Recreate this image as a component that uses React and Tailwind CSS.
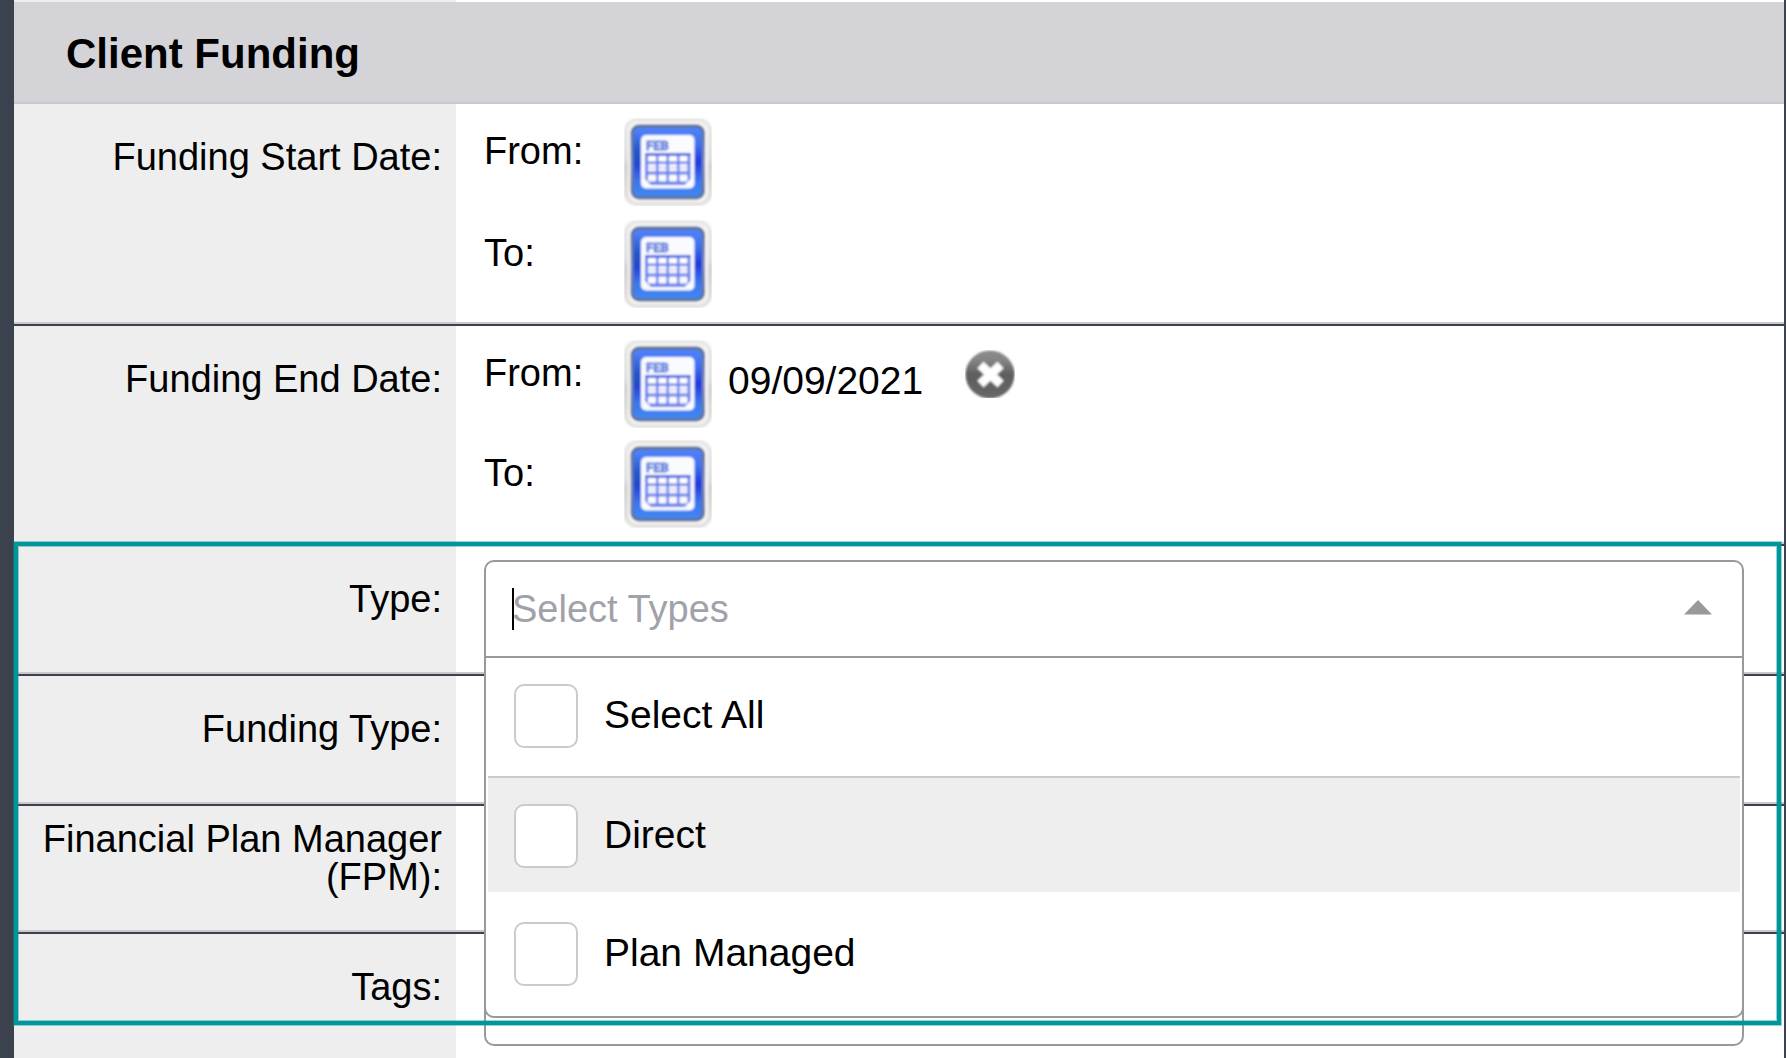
import { useState } from "react";

function CalendarIcon() {
  return (
    <svg viewBox="0 0 88 88" className="block size-[88px]" aria-hidden="true">
      <defs>
        <linearGradient id="cal-frame" x1="0" y1="0" x2="0" y2="1">
          <stop offset="0" stopColor="#e9e8e7" />
          <stop offset="0.45" stopColor="#dedede" />
          <stop offset="0.55" stopColor="#d2d0ce" />
          <stop offset="1" stopColor="#e4e3e1" />
        </linearGradient>
        <linearGradient id="cal-blue" x1="0" y1="0" x2="0" y2="1">
          <stop offset="0" stopColor="#5384fb" />
          <stop offset="0.25" stopColor="#3f72ee" />
          <stop offset="0.5" stopColor="#2038de" />
          <stop offset="0.75" stopColor="#3a74ea" />
          <stop offset="1" stopColor="#4489f4" />
        </linearGradient>
        <linearGradient id="cal-left" x1="0" y1="0" x2="0" y2="1">
          <stop offset="0" stopColor="#2258c4" stopOpacity="0" />
          <stop offset="0.4" stopColor="#1f55c0" stopOpacity="0.9" />
          <stop offset="0.7" stopColor="#2258c4" stopOpacity="0" />
        </linearGradient>
        <linearGradient id="cal-edge" x1="0" y1="0" x2="0" y2="1">
          <stop offset="0" stopColor="#5d6f92" />
          <stop offset="0.5" stopColor="#7a89b8" />
          <stop offset="1" stopColor="#5d7093" />
        </linearGradient>
        <linearGradient id="cal-cell" x1="0" y1="0" x2="0" y2="1">
          <stop offset="0" stopColor="#ffffff" />
          <stop offset="0.5" stopColor="#dfe2fb" />
          <stop offset="1" stopColor="#ffffff" />
        </linearGradient>
        <filter id="cal-soft" x="-5%" y="-5%" width="110%" height="110%">
          <feGaussianBlur stdDeviation="1.2" />
        </filter>
      </defs>
      <g filter="url(#cal-soft)">
        <rect x="2" y="2" width="84" height="84" rx="11" fill="#f6f6f5" stroke="url(#cal-frame)" strokeWidth="4" />
        <rect x="8" y="8" width="71.500" height="72" rx="7" fill="url(#cal-blue)" stroke="url(#cal-edge)" strokeWidth="3" />
        <rect x="9.5" y="14" width="7" height="58" fill="url(#cal-left)" />
        <rect x="17" y="17" width="53.500" height="53.500" rx="5" fill="#fafbff" />
        <text x="22" y="32" fontSize="13" fontWeight="700" fill="#6584de" stroke="#6584de" strokeWidth="0.8" className="font-['Roboto',sans-serif]">
          FEB
        </text>
        <path d="M21 35H66.500V61L60.500 67H27L21 61Z" fill="#6d83ea" />
        <path d="M21 35H66.500V37.500H21Z" fill="#4a68de" />
        {[24, 34.500, 45, 55.500].map((x) => (
          <g key={x}>
            <rect x={x} y="38" width="8" height="5.500" rx="0.5" fill="#ffffff" />
            <rect x={x} y="46" width="8" height="7.500" rx="0.5" fill="url(#cal-cell)" />
            <rect x={x} y="56.500" width="8" height="7" rx="1" fill="#fafbff" />
          </g>
        ))}
      </g>
    </svg>
  );
}

function ClearIcon() {
  return (
    <svg viewBox="0 0 50 48" className="block h-[48px] w-[50px]" aria-hidden="true">
      <defs>
        <linearGradient id="clear-fill" x1="0" y1="0" x2="0" y2="1">
          <stop offset="0" stopColor="#8c8c8c" />
          <stop offset="0.2" stopColor="#858585" />
          <stop offset="0.5" stopColor="#5e5e5e" />
          <stop offset="1" stopColor="#686868" />
        </linearGradient>
        <filter id="clear-soft" x="-5%" y="-5%" width="110%" height="110%">
          <feGaussianBlur stdDeviation="1.1" />
        </filter>
      </defs>
      <g filter="url(#clear-soft)">
        <ellipse cx="25" cy="24.500" rx="24.500" ry="24" fill="url(#clear-fill)" />
        <path d="M15.500 15L35.500 34M35.500 15L15.500 34" stroke="#ffffff" strokeWidth="9" />
      </g>
    </svg>
  );
}

function Row({ label, htmlFor, first, last, tight, children }) {
  return (
    <div
      className={
        "grid grid-cols-[442px_minmax(0,1fr)] border-[#c9c9c9] border-t-[#3b424d] " +
        (first ? "border-b-2 " : last ? "grow border-t-2 " : "border-y-2 ")
      }
    >
      <div className={"bg-[#eeeeee] pr-3.5 pl-3 text-right " + (tight ? "pt-3.5" : "pt-[34px]")}>
        <label htmlFor={htmlFor}>{label}</label>
      </div>
      <div className={"pt-3.5 pr-10 pl-7 " + (tight || last ? "pb-3" : "pb-3.5")}>{children}</div>
    </div>
  );
}

function DateLine({ id, label, value, onClear }) {
  return (
    <div className="flex items-start">
      <label htmlFor={id} className="w-[140px] pt-3.5">
        {label}
      </label>
      <button id={id} type="button" className="shrink-0 cursor-pointer">
        <CalendarIcon />
      </button>
      {value && (
        <>
          <span className="pt-[22px] pl-4 text-[39px] leading-[38px]">{value}</span>
          <button type="button" aria-label="Clear date" onClick={onClear} className="mt-2.5 ml-[42px] cursor-pointer">
            <ClearIcon />
          </button>
        </>
      )}
    </div>
  );
}

function Field({ id }) {
  return (
    <input
      id={id}
      type="text"
      className="block h-[98px] w-full rounded-[10px] border-2 border-[#999999] bg-white px-6 outline-none"
    />
  );
}

function Option({ label, className }) {
  return (
    <label className={"flex items-center gap-[26px] pl-[26px] text-[39px] leading-[38px] " + className}>
      <input
        type="checkbox"
        className="size-16 shrink-0 appearance-none rounded-[10px] border-2 border-[#cbcbcb] bg-white checked:bg-[#009999]"
      />
      <span className="pb-0.5">{label}</span>
    </label>
  );
}

function TypeSelect({ id }) {
  const [query, setQuery] = useState("");
  return (
    <div className="relative">
      <div className="relative flex h-[98px] items-center rounded-t-[10px] border-2 border-[#999999] bg-white pr-[30px] pl-[26px]">
        {query === "" && <span className="absolute top-[26px] left-[26px] h-[42px] w-0.5 bg-black" />}
        <input
          id={id}
          type="text"
          role="combobox"
          aria-expanded="true"
          aria-controls="type-options"
          value={query}
          onChange={(e) => setQuery(e.target.value)}
          placeholder="Select Types"
          className="h-12 min-w-0 grow bg-transparent outline-none placeholder:text-[#a1a1aa]"
        />
        <svg viewBox="0 0 28 18" className="h-[18px] w-[28px] shrink-0" aria-hidden="true">
          <path d="M14 0L28 14.500H0Z" fill="#999999" />
        </svg>
      </div>
      <div
        id="type-options"
        className="absolute inset-x-0 top-full z-10 rounded-b-[10px] border-x-2 border-b-2 border-[#999999] bg-white px-0.5"
      >
        <Option label="Select All" className="border-b-2 border-[#cbcbcb] pt-[26px] pb-7" />
        <Option label="Direct" className="bg-[#eeeeee] pt-[26px] pb-6" />
        <Option label="Plan Managed" className="py-[30px]" />
      </div>
    </div>
  );
}

export default function App() {
  const [endFrom, setEndFrom] = useState("09/09/2021");
  return (
    <main className="flex min-h-screen flex-col border-r-2 border-l-[14px] border-[#3b424d] bg-white font-['Liberation_Sans',Arial,sans-serif] text-[38px] leading-[38px] text-black">
      <div className="h-0.5 w-[442px] bg-[#eeeeee]" />
      <h1 className="border-b-2 border-[#c9c9c9] bg-[#d4d3d8] pt-7 pb-6 pl-[52px] text-[42px] leading-[48px] font-bold">
        Client Funding
      </h1>

      <Row label="Funding Start Date:" htmlFor="start-from" first>
        <div className="flex flex-col gap-3.5">
          <DateLine id="start-from" label="From:" />
          <DateLine id="start-to" label="To:" />
        </div>
      </Row>
      <Row label="Funding End Date:" htmlFor="end-from">
        <div className="flex flex-col gap-3">
          <DateLine id="end-from" label="From:" value={endFrom} onClear={() => setEndFrom("")} />
          <DateLine id="end-to" label="To:" />
        </div>
      </Row>

      <section className="relative flex grow flex-col">
        <Row label="Type:" htmlFor="type">
          <TypeSelect id="type" />
        </Row>
        <Row label="Funding Type:" htmlFor="funding-type">
          <Field id="funding-type" />
        </Row>
        <Row label="Financial Plan Manager (FPM):" htmlFor="fpm" tight>
          <Field id="fpm" />
        </Row>
        <Row label="Tags:" htmlFor="tags" last>
          <Field id="tags" />
        </Row>
        <div className="pointer-events-none absolute -top-0.5 right-[3px] bottom-[33px] left-0 z-20 border-4 border-[#00969a] shadow-[0_0_0_1px_#00969a66,inset_0_0_0_1px_#00969a66]" />
      </section>
    </main>
  );
}
